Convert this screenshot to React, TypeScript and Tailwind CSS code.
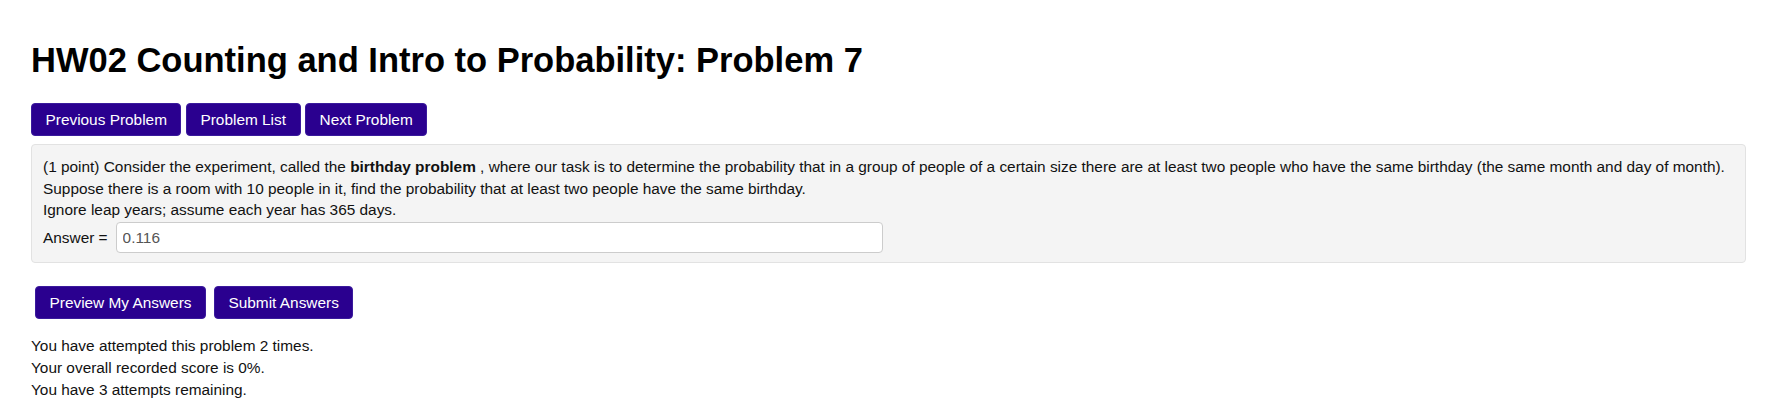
const navButtons = ['Previous Problem', 'Problem List', 'Next Problem'];

const btn =
    'h-[33px] px-[13.5px] flex items-center rounded-[4px] bg-[#2a008f] border border-[#3a1a9c] text-white text-[15.4px] leading-none whitespace-nowrap';

export default function App() {
    return (
        <div className="min-h-screen bg-white text-[#111] font-['Liberation_Sans',Arial,sans-serif]">
            <div className="pl-[31px] pt-[41px] w-[1746px]">
                <h2 className="text-[34.5px] leading-[38px] font-bold text-black">
                    HW02 Counting and Intro to Probability: Problem 7
                </h2>

                {/* Problem navigation */}
                <div className="mt-[24px] flex gap-[4.5px]">
                    {navButtons.map((label) => (
                        <button key={label} className={btn}>
                            {label}
                        </button>
                    ))}
                </div>

                {/* Problem body */}
                <div className="mt-[8px] w-[1715px] bg-[#f4f4f4] border border-[#e2e2e2] rounded-[4px] pt-[11px] pb-[9px] pl-[11px] pr-[11px] text-[15.4px] leading-[21.5px]">
                    <div className="whitespace-nowrap">
                        (1 point) Consider the experiment, called the <b>birthday problem</b> , where our task is to
                        determine the probability that in a group of people of a certain size there are at least two
                        people who have the same birthday (the same month and day of month).
                    </div>
                    <div className="whitespace-nowrap">
                        Suppose there is a room with 10 people in it, find the probability that at least two people have
                        the same birthday.
                    </div>
                    <div className="whitespace-nowrap">Ignore leap years; assume each year has 365 days.</div>
                    <div className="mt-[1.5px] flex items-center gap-[8px]">
                        <span>Answer =</span>
                        <input
                            readOnly
                            value="0.116"
                            className="w-[767px] h-[31px] bg-white border border-[#cccccc] rounded-[4px] px-[6px] text-[15.4px] text-[#555] outline-none"
                        />
                    </div>
                </div>

                {/* Submit */}
                <div className="mt-[23px] ml-[4px] flex gap-[8px]">
                    <button className={btn}>Preview My Answers</button>
                    <button className={btn}>Submit Answers</button>
                </div>

                <div className="mt-[16px] text-[15.4px] leading-[22px]">
                    <p>You have attempted this problem 2 times.</p>
                    <p>Your overall recorded score is 0%.</p>
                    <p>You have 3 attempts remaining.</p>
                </div>
            </div>
        </div>
    );
}
